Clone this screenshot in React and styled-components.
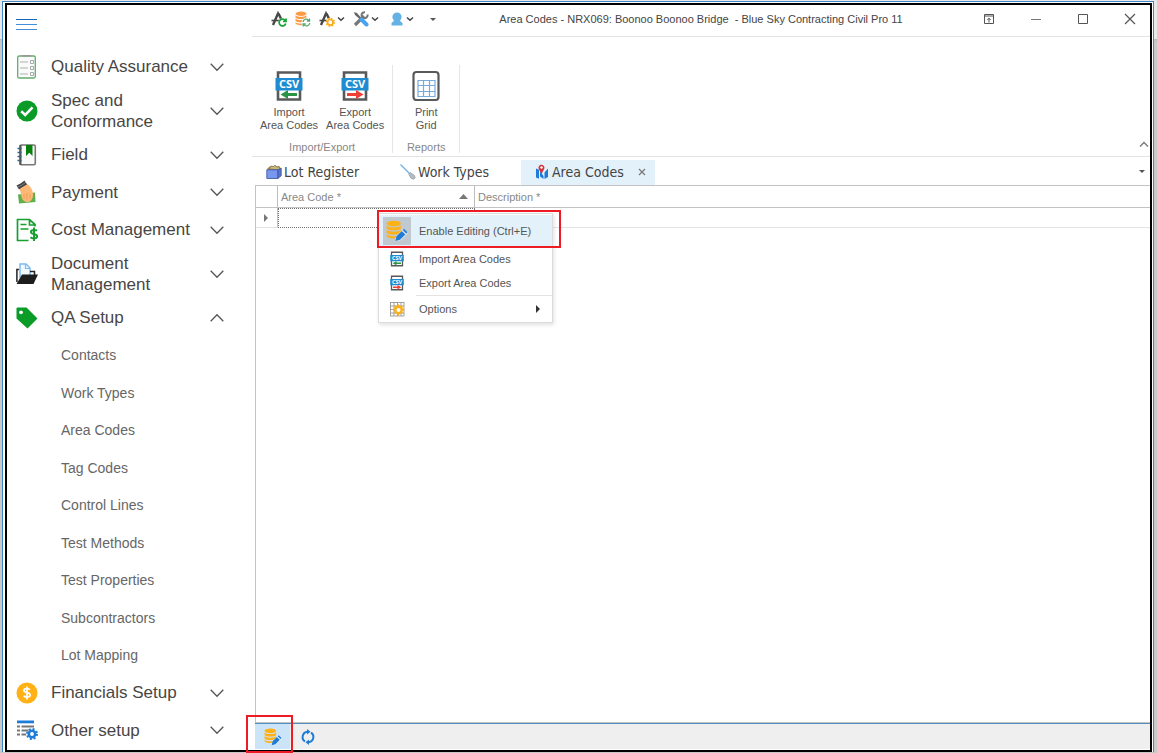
import React from 'react';
import styled, { createGlobalStyle } from 'styled-components';

const GlobalStyle = createGlobalStyle`
  * {
    box-sizing: border-box;
  }

  body {
    margin: 0;
    font-family: 'Liberation Sans', Arial, sans-serif;
    font-size: 11px;
    color: #555;
  }

  button {
    padding: 0;
    border: 0;
    background: none;
    font: inherit;
    color: inherit;
    cursor: pointer;
  }

  ul {
    margin: 0;
    padding: 0;
    list-style: none;
  }

  svg {
    display: block;
    flex-shrink: 0;
  }
`;

/* ---------- window ---------- */

const Desktop = styled.div`
  display: flex;
  min-height: 100vh;
  padding: 1px 3px 1px 2px;
  background: linear-gradient(#e6e8ea 39px, #b5b5b5 39px, #c9c9c9 41px);
`;

const Window = styled.div`
  display: flex;
  flex: 1;
  min-width: 0;
  padding: 1px 1px 0 2px;
  border: 1px solid #3f86c6;
  border-bottom: 0;
  background: #fff;
`;

const Frame = styled.div`
  display: flex;
  flex: 1;
  min-width: 0;
  border: 2px solid #000;
  background: #fff;
`;

/* ---------- sidebar ---------- */

const Sidebar = styled.nav`
  display: flex;
  flex-direction: column;
  flex: 0 0 245px;
`;

const MenuToggle = styled.button`
  align-self: flex-start;
  margin: 12px 0 18px 9px;
`;

const NavList = styled.ul`
  display: flex;
  flex: 1;
  flex-direction: column;
  justify-content: space-between;
`;

const NavButton = styled.button`
  display: flex;
  align-items: center;
  width: 100%;
  min-height: 37px;
  padding: 3px 28px 5px 9px;
  font-size: 17px;
  line-height: 21px;
  color: #484644;
  text-align: left;

  & > span {
    flex: 1;
    padding-left: 13px;
  }
`;

const SubLink = styled.a`
  display: flex;
  align-items: center;
  height: 37px;
  padding: 0 0 2px 54px;
  font-size: 14px;
  color: #666;
  text-decoration: none;
`;

/* ---------- title bar ---------- */

const Main = styled.main`
  display: flex;
  flex: 1;
  flex-direction: column;
  min-width: 0;
`;

const TitleBar = styled.header`
  display: grid;
  grid-template-columns: 1fr auto 1fr;
  align-items: center;
  height: 32px;
  padding-bottom: 3px;
  border-bottom: 1px solid #e3e3e3;
`;

const QuickAccess = styled.div`
  display: flex;
  align-items: center;
  padding-left: 19px;
`;

const QuickButton = styled.button`
  display: flex;
  align-items: center;
  gap: 2px;
  margin-right: ${({ gap }) => gap || 8}px;
`;

const Title = styled.h1`
  margin: 0;
  font-size: 11px;
  font-weight: normal;
  color: #444;
  white-space: pre;
`;

const WindowControls = styled.div`
  display: flex;
  justify-content: flex-end;
  gap: 31px;
  padding-right: 12px;
`;

/* ---------- ribbon ---------- */

const Ribbon = styled.div`
  display: flex;
  height: 120px;
  padding: 28px 0 3px;
  border-bottom: 1px solid #e3e3e3;
`;

const RibbonGroup = styled.section`
  display: flex;
  flex-direction: column;
  justify-content: space-between;
  padding: 5px 8px 0;
  border-right: 1px solid #e6e6e6;
`;

const RibbonButtons = styled.div`
  display: flex;
  justify-content: center;
  gap: 8px;
`;

const RibbonButton = styled.button`
  display: flex;
  flex-direction: column;
  align-items: center;
  gap: 4px;
  min-width: 50px;
  line-height: 13px;
  white-space: pre;
`;

const GroupLabel = styled.div`
  line-height: 12px;
  color: #888;
  text-align: center;
`;

const CollapseButton = styled.button`
  align-self: flex-end;
  margin: 0 1px 4px auto;
`;

/* ---------- tabs ---------- */

const TabBar = styled.div`
  display: flex;
  align-items: center;
  height: 28px;
  padding: 3px 4px 0 1px;
`;

const Tab = styled.div`
  display: flex;
  align-items: center;
  justify-content: space-between;
  min-width: 134px;
  height: 25px;
  padding: 0 0 2px 13px;
  background: ${({ active }) => (active ? '#e3f1fa' : 'none')};
`;

const TabButton = styled.button`
  display: flex;
  align-items: center;
  gap: 2px;
  font-family: 'DejaVu Sans Condensed', 'DejaVu Sans', sans-serif;
  font-size: 14px;
  line-height: 24px;
  color: #444;
`;

const TabClose = styled.span`
  display: flex;
  justify-content: center;
  width: 27px;
`;

const TabMenuButton = styled.button`
  margin: 0 0 3px auto;
`;

/* ---------- grid ---------- */

const GridArea = styled.div`
  position: relative;
  flex: 1;
  margin-left: 3px;
  border: solid #c3c3c3;
  border-width: 1px 0 1px 1px;
`;

const Table = styled.table`
  width: 100%;
  border-collapse: separate;
  border-spacing: 0;
  table-layout: fixed;
`;

const HeadCell = styled.th`
  width: ${({ width }) => (width ? `${width}px` : 'auto')};
  height: 22px;
  padding: 0 6px 0 3px;
  border-right: ${({ width }) => (width ? '1px solid #bdbdbd' : '0')};
  border-bottom: 1px solid #c3c3c3;
  font-weight: normal;
  color: #888;
  text-align: left;

  & > div {
    display: flex;
    align-items: center;
    justify-content: space-between;
  }
`;

const Cell = styled.td`
  height: 20px;
  padding: 0 0 0 7px;
  border-bottom: 1px solid #e3e3e3;

  ${({ focused }) => focused && 'border: 1px dotted #707070;'}
`;

const RowMarkerCell = styled(Cell)`
  border-right: 1px solid #c3c3c3;
`;

/* ---------- context menu ---------- */

const ContextMenu = styled.ul`
  position: absolute;
  top: 27px;
  left: 122px;
  width: 175px;
  padding-top: 1px;
  border: 1px solid #dcdcdc;
  background: #fff;
  box-shadow: 1px 2px 4px rgba(0, 0, 0, 0.12);
`;

const MenuItem = styled.li`
  position: relative;
  ${({ divided }) =>
    divided &&
    `
    padding: 2px 0 1px;
    background: linear-gradient(#e3e3e3, #e3e3e3) 37px 0 / 100% 1px no-repeat;
  `}
`;

const MenuButton = styled.button`
  display: flex;
  align-items: center;
  width: 100%;
  height: ${({ active }) => (active ? 32 : 24)}px;
  padding: 0 11px 0 4px;
  background: ${({ active }) => (active ? '#e3f1fa' : 'none')};
  text-align: left;

  & > span:nth-child(2) {
    flex: 1;
    padding-left: 8px;
  }
`;

const MenuIcon = styled.span`
  display: grid;
  place-items: center;
  width: 28px;
  height: ${({ active }) => (active ? 28 : 20)}px;
  background: ${({ active }) => (active ? '#c0c8d0' : 'none')};
`;

const Callout = styled.span`
  position: absolute;
  inset: ${({ inset }) => inset};
  border: 2px solid #ed1c24;
  pointer-events: none;
`;

/* ---------- status bar ---------- */

const StatusBar = styled.footer`
  display: flex;
  height: 27px;
  margin-left: 3px;
  border-top: 1px solid #4f8fc4;
  border-bottom: 1px solid #fff;
  background: #efefef;
`;

const StatusButton = styled.button`
  position: relative;
  display: grid;
  place-items: center;
  width: 35px;
  background: ${({ active }) => (active ? '#cce4f7' : 'none')};
`;

/* ---------- icons ---------- */

const Icon = ({ size = 16, height, box = 16, children }) => (
  <svg
    width={size}
    height={height || size}
    viewBox={typeof box === 'string' ? box : `0 0 ${box} ${box}`}
    fill="none"
    aria-hidden="true"
  >
    {children}
  </svg>
);

const Chevron = ({ up }) => (
  <Icon size={14} box={14}>
    <path
      d={up ? 'M.7 10.2 7 3.8l6.3 6.4' : 'M.7 3.8 7 10.2l6.3-6.4'}
      stroke="#555"
      strokeWidth="1.3"
    />
  </Icon>
);

const SmallChevron = () => (
  <Icon size={8} box={8}>
    <path d="M1 2.5 4 5.3 7 2.5" stroke="#444" strokeWidth="1.5" />
  </Icon>
);

const Triangle = () => (
  <Icon size={8} box={8}>
    <path d="M1 3h6L4 6z" fill="#555" />
  </Icon>
);

const HamburgerIcon = () => (
  <Icon size={21} height={14} box="0 0 21 14">
    <path d="M0 2.5h21" stroke="#1468b8" />
    <path d="M0 7.5h21M0 12.5h21" stroke="#3f90d4" />
  </Icon>
);

const ChecklistIcon = () => (
  <Icon size={22} height={24} box="0 0 22 24">
    <rect x="1.7" y="1" width="17.6" height="22" rx="1.5" fill="#fafafa" stroke="#62ad6c" strokeWidth="1.3" />
    <path d="M6 .8h9" stroke="#999" strokeWidth="1.6" />
    <path d="M4 7h8M4 13h8M4 19h8" stroke="#b0b0b0" strokeWidth="1.2" />
    <path d="M14.5 5.5h3v3h-3zM14.5 11.5h3v3h-3zM14.5 17.5h3v3h-3z" stroke="#aaa" />
  </Icon>
);

const CheckCircleIcon = () => (
  <Icon size={22} box={22}>
    <circle cx="11" cy="11" r="10.5" fill="#0a9c26" />
    <path d="m5.2 11.2 4 3.7 7.3-7.6" stroke="#fff" strokeWidth="2.6" />
  </Icon>
);

const NotebookIcon = () => (
  <Icon size={22} box={22}>
    <rect x="4" y="1" width="15.3" height="19.8" rx="1.5" fill="#fafafa" stroke="#777" strokeWidth="1.6" />
    <path d="M4.5 1v20" stroke="#555" strokeWidth="2" />
    <path d="M1.5 4.5h4M1.5 8.5h4M1.5 12.5h4M1.5 16.5h4" stroke="#39637f" strokeWidth="1.7" />
    <path d="M10 1h6.5v11l-3.2-3.2L10 12z" fill="#07800d" />
  </Icon>
);

const PaymentIcon = () => (
  <Icon size={22} height={24} box="0 0 22 24">
    <path d="m2 14.5 17-2 .5 9.5L3 23.5z" fill="#5faf4b" />
    <path d="m3.5 8 6.5-5c4 3 7.5 7 7 12.5-.3 4-2.5 6.5-5.5 6.5C8 22 6 20 5.5 16.5z" fill="#fbb877" />
    <path d="M8 14v5m3-6v7m3-6v5" stroke="#f09b54" strokeWidth=".8" />
    <path d="M.5 5.5C3 4.500 6 2.500 8.500.5l2.500 4c-2.500 1-5.500 3-8 5z" fill="#444" />
    <path d="M1.5 7C5 6 7.5 4 10 2" stroke="#aaa" strokeWidth=".6" />
  </Icon>
);

const CostIcon = () => (
  <Icon size={22} height={24} box="0 0 22 24">
    <path d="M12.5 22.5h-11v-21h12l5.5 5v2M13.5 2v5H19" stroke="#16a031" strokeWidth="1.7" />
    <path d="M4.5 6.5h6M4.5 11h8" stroke="#16a031" strokeWidth="1.7" />
    <path
      d="M21 12.8c-1-1-6-1.500-6 1.200 0 3 6.200 1.300 6.200 4.300 0 2.800-5.200 2.500-6.700 1M18 9.500V23"
      stroke="#16a031"
      strokeWidth="2"
    />
  </Icon>
);

const FolderIcon = () => (
  <Icon size={22} box={22}>
    <path d="M.9 19V6.5h2" stroke="#222" strokeWidth="1.5" />
    <path d="M4 15V1h6l4 4v8" fill="#f2f9ff" stroke="#7cbcf0" strokeWidth="1.5" />
    <path d="M9.5 1v4.5H14" stroke="#7cbcf0" strokeWidth="1.2" />
    <path d="M14 8.5h4.5V12" stroke="#222" strokeWidth="1.5" />
    <path d="M6 11.5h16L17.5 21H.5z" fill="#1d1d1d" />
  </Icon>
);

const TagIcon = () => (
  <Icon size={22} box={22}>
    <path d="M.5 1.5q0-1 1-1h9l11 11-10 10-11-10z" fill="#0a9c26" />
    <circle cx="5" cy="5.3" r="1.9" fill="#fff" />
  </Icon>
);

const CoinIcon = () => (
  <Icon size={22} box={22}>
    <circle cx="11" cy="11" r="10.5" fill="#ffb115" />
    <path
      d="M14 7.7c-1.5-1.4-6-1.6-6 .7 0 2.8 6.2 1.7 6.2 4.7 0 2.5-4.7 2.5-6.5.7M11 4.5v13"
      stroke="#fff"
      strokeWidth="1.7"
    />
  </Icon>
);

const SetupIcon = () => (
  <Icon size={22} box={22}>
    <path d="M1 1.5h17v2.8H1z" fill="#1f7bd8" />
    <path d="M1 7.5h3M5.5 7.5H18M1 11.5h3M5.5 11.5h7M1 15.5h3M5.5 15.5H10" stroke="#777" strokeWidth="1.9" />
    <circle cx="16" cy="15" r="3.2" stroke="#1f7bd8" strokeWidth="2.6" />
    <circle cx="16" cy="15" r="5" stroke="#1f7bd8" strokeWidth="2" strokeDasharray="2 1.93" />
  </Icon>
);

const Compass = () => (
  <g stroke="#484848">
    <path d="M7 .5v3" strokeWidth="1.6" />
    <path d="M7 2.5 2 14M7.5 2.5 13 14" strokeWidth="2.4" />
    <path d="M.5 9.5h12" strokeWidth="1.6" />
  </g>
);

const CompassRefreshIcon = () => (
  <Icon>
    <Compass />
    <circle cx="11.5" cy="11.5" r="4.3" fill="#fff" />
    <path d="M14.3 9.500a3.400 3.400 0 1 0 .5 3M15 7.500v3h-3" stroke="#17a535" strokeWidth="1.7" />
  </Icon>
);

const CompassGearIcon = () => (
  <Icon>
    <Compass />
    <circle cx="11.3" cy="11.3" r="4.3" fill="#fff" />
    <circle cx="11.3" cy="11.3" r="2.8" stroke="#fbab18" strokeWidth="1.7" />
    <circle cx="11.3" cy="11.3" r="4" stroke="#fbab18" strokeWidth="1.4" strokeDasharray="1.6 1.54" />
  </Icon>
);

const Cylinder = ({ color }) => (
  <g fill={color}>
    <ellipse cx="6" cy="2.7" rx="5.5" ry="2.2" />
    <path d="M.5 4.2c1.5 2 9.5 2 11 0v2.300c-1.500 2-9.500 2-11 0z" />
    <path d="M.5 7.6c1.5 2 9.5 2 11 0v2.200c-1.500 2-9.500 2-11 0z" />
    <path d="M.5 11c1.5 2 9.5 2 11 0v1.500c-1.500 2.300-9.500 2.300-11 0z" />
  </g>
);

const DataRefreshIcon = () => (
  <Icon>
    <Cylinder color="#fd9a44" />
    <circle cx="11.3" cy="11.5" r="4.7" fill="#fff" />
    <path
      d="M8 11a3.3 3.3 0 0 1 6-1.5M14.8 12a3.3 3.3 0 0 1-6 1.5M14.5 7.5V10H12M8.2 15.5V13h2.5"
      stroke="#51a86a"
      strokeWidth="1.3"
    />
  </Icon>
);

const DataEditIcon = ({ size = 18 }) => (
  <Icon size={size} box="0 0 17 17">
    <Cylinder color="#ffb115" />
    <path d="m6.7 16.5 1-4.2 5.8-5.8L17 10l-5.8 5.800z" fill="#fff" fillOpacity=".5" />
    <path d="m7.2 16.2.9-3.6 4.1-4.1 2.7 2.7-4.1 4.1zM12.9 7.8l1-1 2.7 2.7-1 1z" fill="#1f7bd8" />
  </Icon>
);

const ToolsIcon = () => (
  <Icon>
    <path d="m2 14 9-9" stroke="#777" strokeWidth="3.2" />
    <path d="M14.5 3.5a3 3 0 1 1-2.500-2.300" stroke="#777" strokeWidth="2" />
    <path d="m1 1 3 .9 4.5 5.3-1.3 1.3L2 4z" fill="#666" />
    <path d="m8.5 8.5 5 5" stroke="#4aa3ee" strokeWidth="4" strokeLinecap="round" />
  </Icon>
);

const UserIcon = () => (
  <Icon size={14} box={14}>
    <circle cx="7" cy="5" r="4.6" fill="#64b1e4" />
    <path d="M1.5 13.5V11L4.500 8.500h5L12.500 11v2.500z" fill="#64b1e4" />
  </Icon>
);

const CsvIcon = ({ size = 32, exporting }) => (
  <Icon size={size} box={32}>
    <path d="M5 2.5h22v27H5z" fill="#fff" stroke="#58595b" strokeWidth="2.6" />
    <path d="M2.5 8h27v12.5h-27z" fill="#1f8bd0" />
    <text
      x="16"
      y="18"
      textAnchor="middle"
      fontFamily="Open Sans, sans-serif"
      fontSize="11"
      fontWeight="700"
      fill="#fff"
    >
      CSV
    </text>
    {exporting ? (
      <path d="M8 23h9v-3l7.5 4.5L17 29v-3H8z" fill="#ee4037" />
    ) : (
      <path d="M24 23h-9v-3l-7.5 4.5L15 29v-3h9z" fill="#2c9346" />
    )}
  </Icon>
);

const PrintGridIcon = () => (
  <Icon size={32} box={32}>
    <rect x="3.5" y="2" width="25" height="28" rx="3" fill="#fff" stroke="#58595b" strokeWidth="2.2" />
    <path
      d="M8 10.5h17v16H8zM8 15.5h17M8 21.5h17M13.5 10.5v16M19.5 10.5v16"
      stroke="#78aadc"
      strokeWidth="1.2"
    />
  </Icon>
);

const LotIcon = () => (
  <Icon>
    <path d="m.5 5.5 3-3h10l2 2.5L12 7z" fill="#a8893b" />
    <path d="m3 5 2-3 2.5.5L9 1l1.5 2 2.5-.5L14 6z" fill="#c8b67a" stroke="#7c6c3f" strokeWidth=".7" />
    <path d="M.8 5.8h11v8.700H.8z" fill="#7898f0" stroke="#4a5aa8" strokeWidth=".9" />
    <path d="m11.8 5.8 3.400-1.500v7.500l-3.400 2.700z" fill="#5672cb" stroke="#4a5aa8" strokeWidth=".9" />
  </Icon>
);

const ShovelIcon = () => (
  <Icon>
    <path d="m.5.5 9 9" stroke="#68aee4" strokeWidth="1.3" />
    <path d="m8.7 10 1.5-1.5 4.3 3 .7 2.5-1.7 1.3-2.5-1z" fill="#b3bdc5" stroke="#8c9aa5" strokeWidth=".7" />
  </Icon>
);

const MapIcon = () => (
  <Icon>
    <path d="m2 4.5 3 1.300v9L2 13.500zM6 7l3.500 5v3L6 12.500zM10.500 8.500 14 4.500V13l-3.500 2z" fill="#1f7bd8" />
    <path d="M7.5 10 4.700 5a3 3 0 1 1 5.600-.2z" fill="#d8343d" />
    <circle cx="7.5" cy="3.5" r="1.2" fill="#fff" />
  </Icon>
);

const OptionsIcon = () => (
  <Icon>
    <path
      d="M1 1.5h14M1 5h14M1 8.5h14M1 12h14M1 15h14M1.5 1v14M5 1v14M8.5 1v14M12 1v14M15 1v14"
      stroke="#999"
      strokeWidth=".9"
    />
    <path
      d="m9.500 3 1.600 1.900 2.500-.3-.1 2.500 2 1.600-2 1.600.1 2.500-2.500-.3L9.500 15l-1.600-2.500-2.500.3.1-2.500-2-1.600 2-1.600-.1-2.500 2.500.3z"
      fill="#fbb01c"
    />
    <circle cx="9.5" cy="8.9" r="2" fill="#fff" />
  </Icon>
);

const RefreshIcon = () => (
  <Icon>
    <path
      d="M5 12.4A5.3 5.3 0 0 1 7.5 2.700M11 3.600a5.300 5.300 0 0 1-2.500 9.700"
      stroke="#1f7bd8"
      strokeWidth="2"
    />
    <path d="M7 0v5.600l3.500-2.800zM9 16v-5.600l-3.500 2.800z" fill="#1f7bd8" />
  </Icon>
);

const RibbonModeIcon = () => (
  <Icon>
    <path d="M3.5 3.5h9v9h-9zM3.5 5h9" stroke="#555" />
    <path d="M8 11.5v-4M6.3 9 8 7.2 9.7 9" stroke="#555" />
  </Icon>
);

const MinimizeIcon = () => (
  <Icon>
    <path d="M3 8.5h10" stroke="#777" />
  </Icon>
);

const MaximizeIcon = () => (
  <Icon>
    <path d="M3.5 3.5h9v9h-9z" stroke="#555" />
  </Icon>
);

const CloseIcon = () => (
  <Icon>
    <path d="m3 3 10 10M13 3 3 13" stroke="#555" strokeWidth="1.2" />
  </Icon>
);

/* ---------- data ---------- */

const navItems = [
  { label: 'Quality Assurance', icon: ChecklistIcon },
  { label: 'Spec and Conformance', icon: CheckCircleIcon },
  { label: 'Field', icon: NotebookIcon },
  { label: 'Payment', icon: PaymentIcon },
  { label: 'Cost Management', icon: CostIcon },
  { label: 'Document Management', icon: FolderIcon },
  { label: 'QA Setup', icon: TagIcon, open: true },
  { label: 'Contacts' },
  { label: 'Work Types' },
  { label: 'Area Codes' },
  { label: 'Tag Codes' },
  { label: 'Control Lines' },
  { label: 'Test Methods' },
  { label: 'Test Properties' },
  { label: 'Subcontractors' },
  { label: 'Lot Mapping' },
  { label: 'Financials Setup', icon: CoinIcon },
  { label: 'Other setup', icon: SetupIcon },
];

const tabs = [
  { label: 'Lot Register', icon: LotIcon },
  { label: 'Work Types', icon: ShovelIcon },
  { label: 'Area Codes', icon: MapIcon, active: true },
];

const NavItem = ({ label, icon: ItemIcon, open }) => (
  <li>
    {ItemIcon ? (
      <NavButton aria-expanded={!!open}>
        <ItemIcon />
        <span>{label}</span>
        <Chevron up={open} />
      </NavButton>
    ) : (
      <SubLink href="#">{label}</SubLink>
    )}
  </li>
);

const App = () => {
  return (
    <Desktop>
      <GlobalStyle />
      <Window>
        <Frame>
          <Sidebar>
            <MenuToggle aria-label="Toggle menu">
              <HamburgerIcon />
            </MenuToggle>
            <NavList>
              {navItems.map(item => (
                <NavItem key={item.label} {...item} />
              ))}
            </NavList>
          </Sidebar>

          <Main>
            <TitleBar>
              <QuickAccess>
                <QuickButton aria-label="Refresh project">
                  <CompassRefreshIcon />
                </QuickButton>
                <QuickButton aria-label="Refresh data">
                  <DataRefreshIcon />
                </QuickButton>
                <QuickButton aria-label="Project settings">
                  <CompassGearIcon />
                  <SmallChevron />
                </QuickButton>
                <QuickButton aria-label="Tools" gap={11}>
                  <ToolsIcon />
                  <SmallChevron />
                </QuickButton>
                <QuickButton aria-label="User" gap={15}>
                  <UserIcon />
                  <SmallChevron />
                </QuickButton>
                <QuickButton aria-label="Customise toolbar">
                  <Triangle />
                </QuickButton>
              </QuickAccess>
              <Title>
                {'Area Codes - NRX069: Boonoo Boonoo Bridge  - Blue Sky Contracting Civil Pro 11'}
              </Title>
              <WindowControls>
                <button aria-label="Ribbon display">
                  <RibbonModeIcon />
                </button>
                <button aria-label="Minimize">
                  <MinimizeIcon />
                </button>
                <button aria-label="Maximize">
                  <MaximizeIcon />
                </button>
                <button aria-label="Close">
                  <CloseIcon />
                </button>
              </WindowControls>
            </TitleBar>

            <Ribbon>
              <RibbonGroup>
                <RibbonButtons>
                  <RibbonButton>
                    <CsvIcon />
                    {'Import\nArea Codes'}
                  </RibbonButton>
                  <RibbonButton>
                    <CsvIcon exporting />
                    {'Export\nArea Codes'}
                  </RibbonButton>
                </RibbonButtons>
                <GroupLabel>Import/Export</GroupLabel>
              </RibbonGroup>
              <RibbonGroup>
                <RibbonButtons>
                  <RibbonButton>
                    <PrintGridIcon />
                    {'Print\nGrid'}
                  </RibbonButton>
                </RibbonButtons>
                <GroupLabel>Reports</GroupLabel>
              </RibbonGroup>
              <CollapseButton aria-label="Collapse ribbon">
                <Icon size={10} box={10}>
                  <path d="m1 7.5 4-4 4 4" stroke="#777" strokeWidth="1.3" />
                </Icon>
              </CollapseButton>
            </Ribbon>

            <TabBar>
              {tabs.map(({ label, icon: TabIcon, active }) => (
                <Tab key={label} active={active}>
                  <TabButton>
                    <TabIcon />
                    {label}
                  </TabButton>
                  <TabClose>
                    {active && (
                      <button aria-label="Close tab">
                        <Icon size={8} box={8}>
                          <path d="m1 1 6 6M7 1 1 7" stroke="#777" strokeWidth="1.2" />
                        </Icon>
                      </button>
                    )}
                  </TabClose>
                </Tab>
              ))}
              <TabMenuButton aria-label="Open tabs">
                <Triangle />
              </TabMenuButton>
            </TabBar>

            <GridArea>
              <Table>
                <thead>
                  <tr>
                    <HeadCell width={22} aria-label="Row" />
                    <HeadCell width={197}>
                      <div>
                        Area Code *
                        <Icon size={9} height={5} box="0 0 9 5">
                          <path d="M0 5 4.5 0 9 5z" fill="#777" />
                        </Icon>
                      </div>
                    </HeadCell>
                    <HeadCell>Description *</HeadCell>
                  </tr>
                </thead>
                <tbody>
                  <tr>
                    <RowMarkerCell>
                      <Icon size={6} height={8} box="0 0 6 8">
                        <path d="M1 0v8l4-4z" fill="#777" />
                      </Icon>
                    </RowMarkerCell>
                    <Cell focused />
                    <Cell />
                  </tr>
                </tbody>
              </Table>

              <ContextMenu>
                <MenuItem>
                  <MenuButton active>
                    <MenuIcon active>
                      <DataEditIcon size={22} />
                    </MenuIcon>
                    <span>Enable Editing (Ctrl+E)</span>
                  </MenuButton>
                  <Callout inset="-5px -9px -1px -2px" />
                </MenuItem>
                <MenuItem>
                  <MenuButton>
                    <MenuIcon>
                      <CsvIcon size={16} />
                    </MenuIcon>
                    <span>Import Area Codes</span>
                  </MenuButton>
                </MenuItem>
                <MenuItem>
                  <MenuButton>
                    <MenuIcon>
                      <CsvIcon size={16} exporting />
                    </MenuIcon>
                    <span>Export Area Codes</span>
                  </MenuButton>
                </MenuItem>
                <MenuItem divided>
                  <MenuButton>
                    <MenuIcon>
                      <OptionsIcon />
                    </MenuIcon>
                    <span>Options</span>
                    <Icon size={6} height={8} box="0 0 6 8">
                      <path d="M1 0v8l4-4z" fill="#333" />
                    </Icon>
                  </MenuButton>
                </MenuItem>
              </ContextMenu>
            </GridArea>

            <StatusBar>
              <StatusButton active aria-label="Enable editing">
                <DataEditIcon />
                <Callout inset="-9px -3px -4px -9px" />
              </StatusButton>
              <StatusButton aria-label="Refresh">
                <RefreshIcon />
              </StatusButton>
            </StatusBar>
          </Main>
        </Frame>
      </Window>
    </Desktop>
  );
};

export default App;
